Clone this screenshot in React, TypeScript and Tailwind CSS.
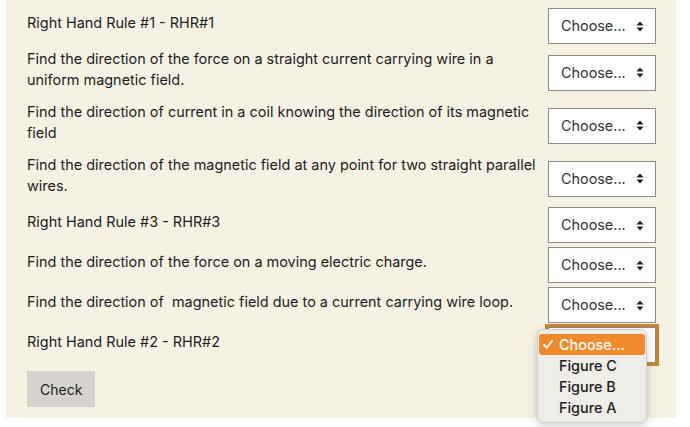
const rows = [
  { text: "Right Hand Rule #1 - RHR#1" },
  { text: "Find the direction of the force on a straight current carrying wire in a uniform magnetic field." },
  { text: "Find the direction of current in a coil knowing the direction of its magnetic field" },
  { text: "Find the direction of the magnetic field at any point for two straight parallel wires." },
  { text: "Right Hand Rule #3 - RHR#3" },
  { text: "Find the direction of the force on a moving electric charge." },
  { text: "Find the direction of \u00a0magnetic field due to a current carrying wire loop." },
  { text: "Right Hand Rule #2 - RHR#2", open: true },
];

const Arrows = () => (
  <svg width="8" height="11" viewBox="0 0 8 11" className="fill-[#222]">
    <path d="M4 0.5 L7.5 4.5 L0.5 4.5 Z" />
    <path d="M4 10.5 L7.5 6.5 L0.5 6.5 Z" />
  </svg>
);

const Select = ({ open }: { open?: boolean }) => (
  <div className="relative shrink-0">
    <div
      className={
        "flex items-center justify-between w-[108px] h-[36px] bg-white border border-[#8e8b86] pl-[12px] pr-[11px] text-[14.4px] text-[#333] " +
        (open ? "outline-[3px] outline-solid outline-[#c98430]" : "")
      }
    >
      <span className={open ? "invisible" : ""}>Choose...</span>
      <Arrows />
    </div>
    {open && (
      <div className="absolute left-[-11px] top-[2px] w-[110px] h-[94px] rounded-[6px] bg-[#efede8] border border-[#d2cfca] shadow-[0_3px_10px_rgba(0,0,0,0.18)] pt-[4px] px-[1px] text-[14.4px] font-medium text-[#222] leading-[21px] z-10">
        <div className="flex items-center h-[21px] rounded-[3px] bg-[#ee8a2c] text-white">
          <span className="w-[20px] pl-[4px] flex items-center">
            <svg width="10" height="9" viewBox="0 0 10 9" fill="none" stroke="white" strokeWidth="1.8" strokeLinecap="round" strokeLinejoin="round">
              <path d="M1 4.8 L3.8 7.8 L9 1" />
            </svg>
          </span>
          <span>Choose...</span>
        </div>
        <div className="pl-[20px]">Figure C</div>
        <div className="pl-[20px]">Figure B</div>
        <div className="pl-[20px]">Figure A</div>
      </div>
    )}
  </div>
);

export default function App() {
  return (
    <div className="bg-white w-[690px] h-[427px] overflow-hidden font-['Inter','Liberation_Sans',sans-serif]">
      <div className="ml-[6px] w-[670px] bg-[#f5f2e4] pt-[8px] pb-[11px] pl-[21px] pr-[20px]">
        <div className="flex flex-col gap-[4px]">
          {rows.map((r, i) => (
            <div key={i} className="flex items-center justify-between">
              <div className="w-[516px] pb-[7px] text-[14.45px] leading-[21px] text-[#1d1d1d]">{r.text}</div>
              <Select open={r.open} />
            </div>
          ))}
        </div>
        <button className="mt-[8px] h-[36px] px-[13px] bg-[#d6d2cd] text-[14px] text-[#1d1d1d]">Check</button>
      </div>
    </div>
  );
}
